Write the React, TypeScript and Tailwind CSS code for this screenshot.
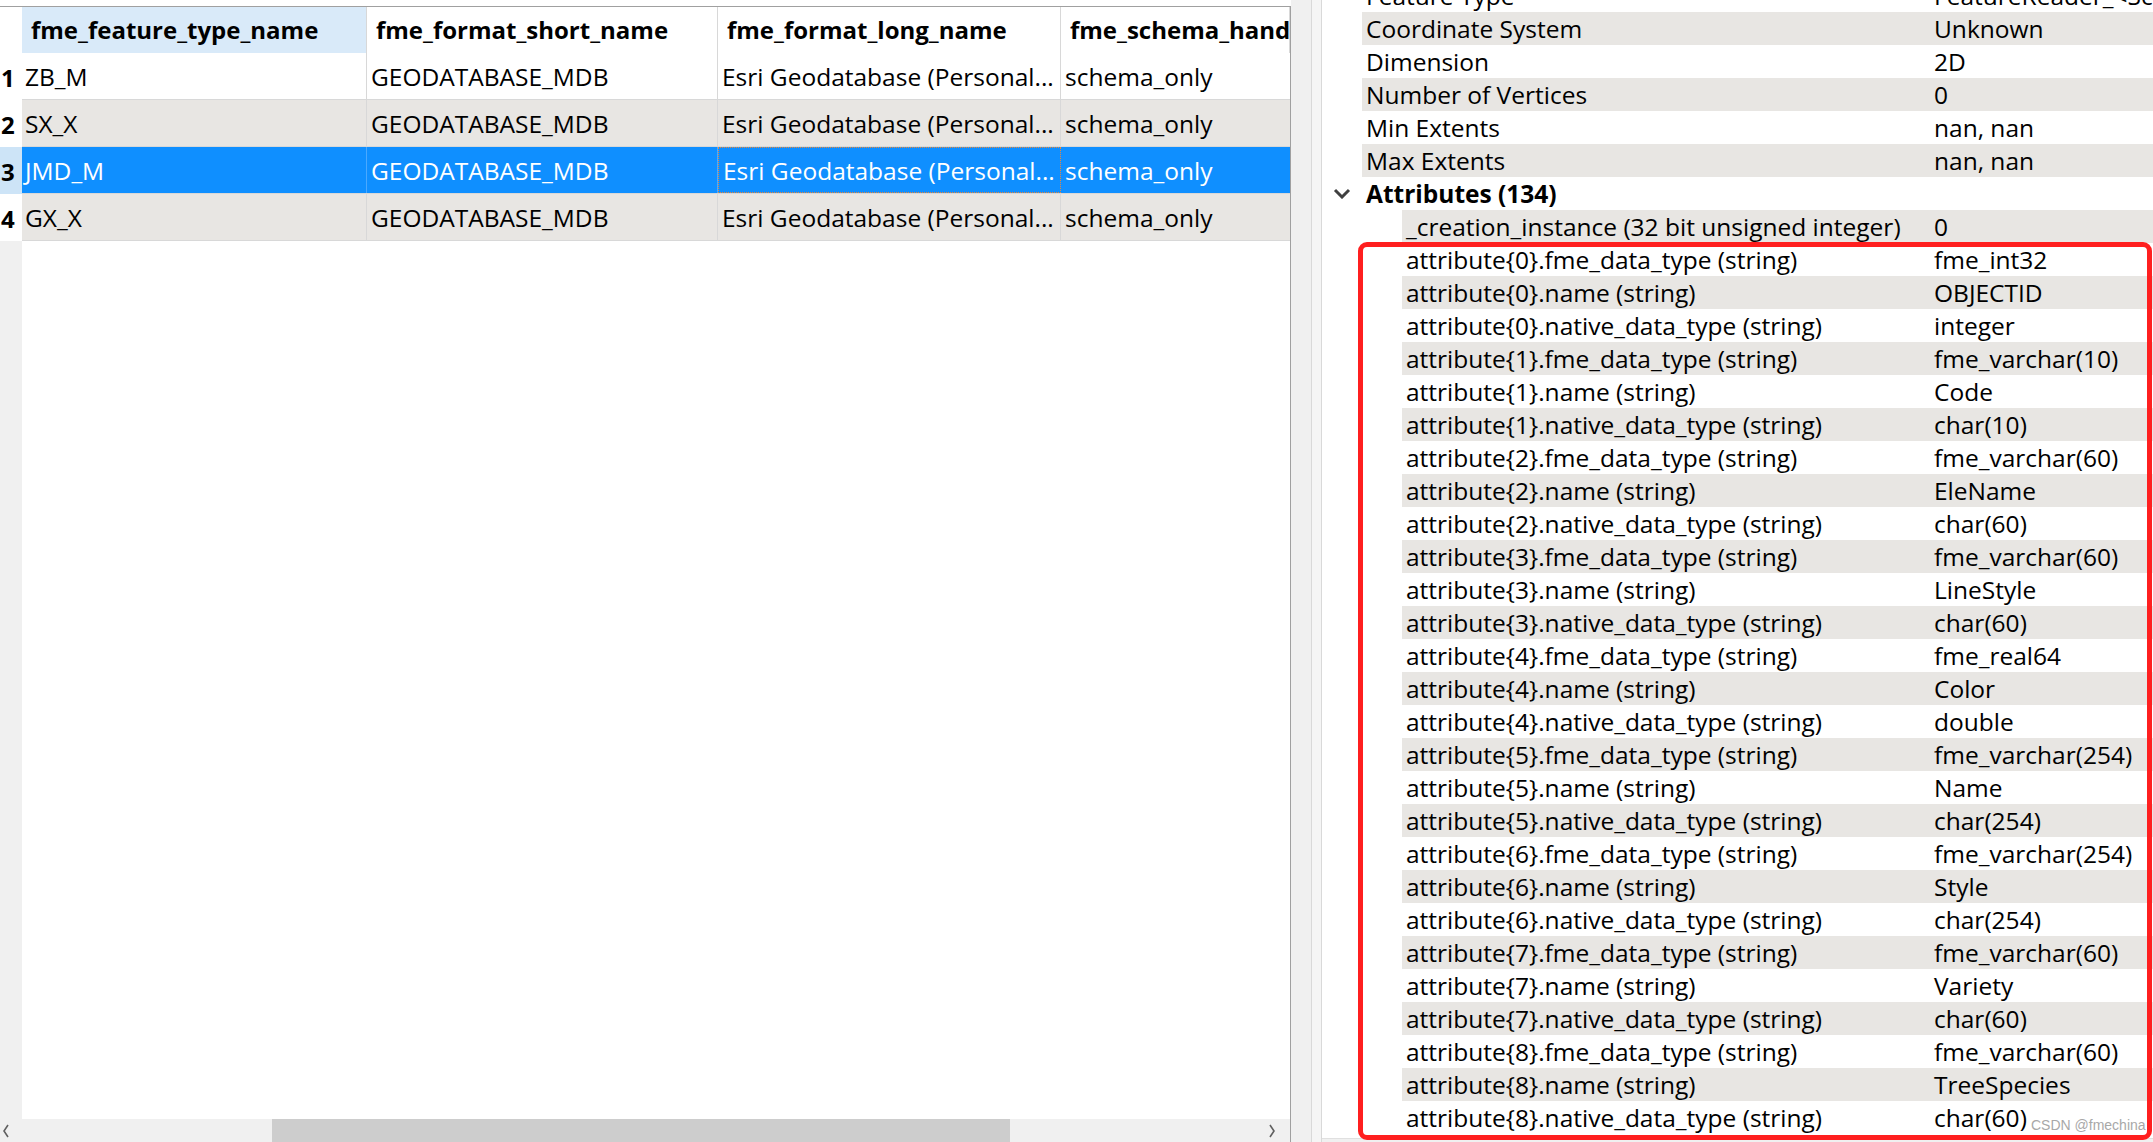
import React from "react";

const cols = [
  { w: "w-[345px]", head: "fme_feature_type_name" },
  { w: "w-[351px]", head: "fme_format_short_name" },
  { w: "w-[343px]", head: "fme_format_long_name" },
  { w: "flex-1", head: "fme_schema_handling" },
];

const rows = [
  { n: 1, name: "ZB_M" },
  { n: 2, name: "SX_X" },
  { n: 3, name: "JMD_M" },
  { n: 4, name: "GX_X" },
];

const topProps = [
  ["Feature Type", "FeatureReader_<Schema>"],
  ["Coordinate System", "Unknown"],
  ["Dimension", "2D"],
  ["Number of Vertices", "0"],
  ["Min Extents", "nan, nan"],
  ["Max Extents", "nan, nan"],
];

const attrs = [
  ["fme_int32", "OBJECTID", "integer"],
  ["fme_varchar(10)", "Code", "char(10)"],
  ["fme_varchar(60)", "EleName", "char(60)"],
  ["fme_varchar(60)", "LineStyle", "char(60)"],
  ["fme_real64", "Color", "double"],
  ["fme_varchar(254)", "Name", "char(254)"],
  ["fme_varchar(254)", "Style", "char(254)"],
  ["fme_varchar(60)", "Variety", "char(60)"],
  ["fme_varchar(60)", "TreeSpecies", "char(60)"],
];

const childRows: [string, string][] = [["_creation_instance (32 bit unsigned integer)", "0"]];
attrs.forEach((a, i) => {
  childRows.push([`attribute{${i}}.fme_data_type (string)`, a[0]]);
  childRows.push([`attribute{${i}}.name (string)`, a[1]]);
  childRows.push([`attribute{${i}}.native_data_type (string)`, a[2]]);
});

const DataTable = () => {
  return (
    <div className="w-[1291px] h-full pt-[6px] shrink-0">
      <div className="flex flex-col h-full border-t border-r border-[#a0a0a0]">
        {/* header */}
        <div className="flex h-[46px] shrink-0 text-[24px]">
          <div className="w-[22px] bg-white" />
          {cols.map((c, i) => (
            <div
              key={c.head}
              className={`${c.w} h-full flex items-center overflow-hidden whitespace-nowrap border-r border-[#d8d8d8] font-bold pl-[9px] ${
                i === 0 ? "bg-[#d9eaf9]" : "bg-white"
              }`}
            >
              {c.head}
            </div>
          ))}
        </div>

        {/* body */}
        {rows.map((r) => {
          const sel = r.n === 3;
          const rowBg = sel ? "bg-[#0f8fff] text-white" : r.n % 2 === 0 ? "bg-[#e8e6e3]" : "bg-white";
          const line = sel ? "border-[#4aa9ff]" : "border-[#d8d8d8]";
          return (
            <div key={r.n} className="flex h-[47px] shrink-0 text-[24.5px]">
              <div
                className={`w-[22px] h-full flex items-center pl-[1px] pt-[2px] font-bold text-[24px] ${
                  sel ? "bg-[#cde4f7]" : "bg-white"
                }`}
              >
                {r.n}
              </div>
              <div className={`flex flex-1 border-b border-[#d8d8d8] ${rowBg}`}>
                <div className={`w-[345px] flex items-center pl-[3px] pt-[2px] border-r ${line} overflow-hidden whitespace-nowrap`}>
                  {r.name}
                </div>
                <div className={`w-[351px] flex items-center pl-[4px] pt-[2px] border-r ${line} overflow-hidden whitespace-nowrap`}>
                  GEODATABASE_MDB
                </div>
                <div
                  className={`w-[343px] flex items-center pl-[4px] pt-[2px] border-r overflow-hidden whitespace-nowrap ${
                    sel ? "border border-dotted border-[#e8883a]" : line
                  }`}
                >
                  Esri Geodatabase (Personal...
                </div>
                <div className="flex-1 flex items-center pl-[4px] pt-[2px] overflow-hidden whitespace-nowrap">
                  schema_only
                </div>
              </div>
            </div>
          );
        })}

        <div className="flex flex-1">
          <div className="w-[22px] bg-[#f0f0f0]" />
          <div className="flex-1 bg-white" />
        </div>

        {/* horizontal scrollbar */}
        <div className="flex h-[23px] shrink-0 bg-[#f0f0f0] items-center">
          <div className="w-[22px] h-full flex items-center justify-start pl-[2px]">
            <svg width="8" height="14" viewBox="0 0 8 14">
              <path d="M6 1 L2 7 L6 13" fill="none" stroke="#606060" strokeWidth="1.6" />
            </svg>
          </div>
          <div className="ml-[250px] w-[738px] h-full bg-[#cdcdcd]" />
          <div className="flex-1" />
          <div className="w-[22px] h-full flex items-center justify-start">
            <svg width="8" height="14" viewBox="0 0 8 14">
              <path d="M2 1 L6 7 L2 13" fill="none" stroke="#606060" strokeWidth="1.6" />
            </svg>
          </div>
        </div>
      </div>
    </div>
  );
};

const Chevron = () => (
  <svg width="18" height="11" viewBox="0 0 18 11">
    <path d="M2 2 L9 9 L16 2" fill="none" stroke="#404040" strokeWidth="3" />
  </svg>
);

const FeatureInfo = () => {
  return (
    <div className="flex flex-col flex-1 h-full overflow-hidden bg-white text-[24.5px]">
      <div className="flex-1 overflow-hidden">
        <div className="-mt-[21px]">
          {topProps.map(([k, v], i) => (
            <div key={k} className="flex h-[33px]">
              <div className="w-[40px] shrink-0" />
              <div className={`flex flex-1 items-center pt-[2px] whitespace-nowrap ${i % 2 === 1 ? "bg-[#e8e6e3]" : ""}`}>
                <div className="w-[568px] shrink-0 pl-[4px]">{k}</div>
                <div className="pl-[4px]">{v}</div>
              </div>
            </div>
          ))}
          <div className="flex h-[33px] items-center">
            <div className="w-[40px] shrink-0 flex justify-start pl-[11px]">
              <Chevron />
            </div>
            <div className="pl-[4px] pt-[2px] font-bold">Attributes (134)</div>
          </div>
          {childRows.map(([k, v], i) => (
            <div key={k} className="flex h-[33px]">
              <div className="w-[80px] shrink-0" />
              <div className={`flex flex-1 items-center pt-[2px] whitespace-nowrap ${i % 2 === 0 ? "bg-[#e8e6e3]" : ""}`}>
                <div className="w-[528px] shrink-0 pl-[4px]">{k}</div>
                <div className="pl-[4px]">{v}</div>
              </div>
            </div>
          ))}
        </div>
      </div>
      <div className="h-[4px] shrink-0 bg-[#f0f0f0] border-t border-[#e0e0e0]" />
    </div>
  );
};

export default function App() {
  return (
    <div className="relative flex w-[2153px] h-[1142px] overflow-hidden bg-white text-black leading-none font-['Open_Sans',sans-serif]">
      <DataTable />
      <div className="w-[20px] h-full bg-[#f0f0f0] shrink-0" />
      <div className="w-[11px] h-full bg-[#f5f5f5] border-l border-r border-[#d9d9d9] shrink-0" />
      <FeatureInfo />

      {/* red annotation box */}
      <div className="absolute left-[1358px] top-[242px] w-[794px] h-[898px] border-[5px] border-[#ff1f1f] rounded-[9px]" />
      <div className="absolute left-[2031px] top-[1118px] text-[14px] text-[#a8a8a8] font-['Liberation_Sans',sans-serif]">
        CSDN @fmechina
      </div>
    </div>
  );
}
